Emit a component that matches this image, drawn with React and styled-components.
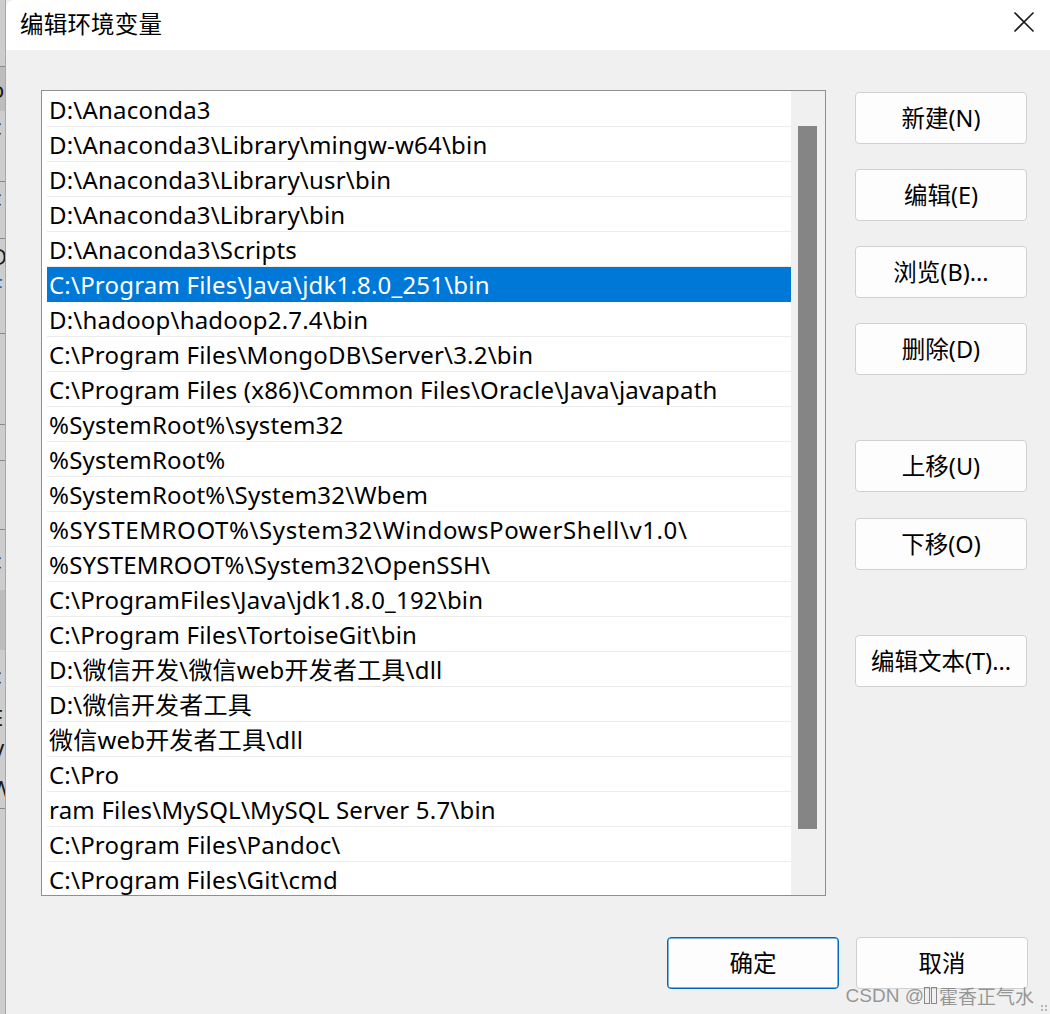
import React from 'react'
import styled, { createGlobalStyle } from 'styled-components'

const GlobalStyle = createGlobalStyle`
  html, body {
    margin: 0;
    padding: 0;
    background: #f0f0f0;
  }
  body {
    font-family: "Noto Sans", "Noto Sans CJK SC", sans-serif;
    color: #000;
  }
`

const paths = [
  'D:\\Anaconda3',
  'D:\\Anaconda3\\Library\\mingw-w64\\bin',
  'D:\\Anaconda3\\Library\\usr\\bin',
  'D:\\Anaconda3\\Library\\bin',
  'D:\\Anaconda3\\Scripts',
  'C:\\Program Files\\Java\\jdk1.8.0_251\\bin',
  'D:\\hadoop\\hadoop2.7.4\\bin',
  'C:\\Program Files\\MongoDB\\Server\\3.2\\bin',
  'C:\\Program Files (x86)\\Common Files\\Oracle\\Java\\javapath',
  '%SystemRoot%\\system32',
  '%SystemRoot%',
  '%SystemRoot%\\System32\\Wbem',
  '%SYSTEMROOT%\\System32\\WindowsPowerShell\\v1.0\\',
  '%SYSTEMROOT%\\System32\\OpenSSH\\',
  'C:\\ProgramFiles\\Java\\jdk1.8.0_192\\bin',
  'C:\\Program Files\\TortoiseGit\\bin',
  'D:\\微信开发\\微信web开发者工具\\dll',
  'D:\\微信开发者工具',
  '微信web开发者工具\\dll',
  'C:\\Pro',
  'ram Files\\MySQL\\MySQL Server 5.7\\bin',
  'C:\\Program Files\\Pandoc\\',
  'C:\\Program Files\\Git\\cmd',
]

const sideButtons = [
  { label: '新建(N)', gap: 0 },
  { label: '编辑(E)', gap: 25 },
  { label: '浏览(B)...', gap: 25 },
  { label: '删除(D)', gap: 25 },
  { label: '上移(U)', gap: 65 },
  { label: '下移(O)', gap: 26 },
  { label: '编辑文本(T)...', gap: 65 },
]

// bits of the window lying behind the dialog
const backRows = [
  { h: 66, ch: '', line: true },
  { h: 44, ch: 'o', shade: true },
  { h: 30, ch: 'c' },
  { h: 40, ch: 'r', line: true },
  { h: 30, ch: 'c' },
  { h: 26, ch: 'l', line: true },
  { h: 34, ch: 'D' },
  { h: 26, ch: 'F', blue: true },
  { h: 34, ch: 'l', blue: true, line: true },
  { h: 90, ch: '', line: true },
  { h: 35, ch: '', line: true },
  { h: 68, ch: '', line: true },
  { h: 60, ch: 'c' },
  { h: 60, ch: '', shade: true },
  { h: 50, ch: 'c' },
  { h: 34, ch: 'E' },
  { h: 34, ch: 'V' },
  { h: 40, ch: 'W', line: true },
  { h: 200, ch: '' },
]

const Screen = styled.div`
  display: flex;
  width: 1050px;
  height: 1014px;
  overflow: hidden;
  position: relative;
`

const BackStrip = styled.div`
  width: 5px;
  flex: none;
  background: #cdcdcd;
  border-right: 1px solid #a8a8a8;
  display: flex;
  flex-direction: column;
  overflow: hidden;
`

const BackRow = styled.div`
  height: ${(p) => p.$h}px;
  flex: none;
  position: relative;
  background: ${(p) => (p.$shade ? '#bdbdbd' : 'transparent')};
  border-bottom: ${(p) => (p.$line ? '1px solid #8a8a8a' : 'none')};
  font-size: 22px;
  line-height: ${(p) => p.$h}px;
  color: ${(p) => (p.$blue ? '#1a6fc4' : '#1a1a1a')};
  white-space: nowrap;
  text-indent: -9px;
`

const Dialog = styled.div`
  flex: 1;
  display: flex;
  flex-direction: column;
  background: #f0f0f0;
  border-top-left-radius: 8px;
  overflow: hidden;
`

const TitleBar = styled.div`
  height: 50px;
  flex: none;
  background: #fff;
  display: flex;
  align-items: center;
  justify-content: space-between;
  padding: 0 15px 0 14px;
  box-sizing: border-box;
`

const Title = styled.div`
  font-size: 23.5px;
  letter-spacing: 0.2px;
  color: #000;
  padding-bottom: 4px;
`

const CloseIcon = styled.svg`
  width: 22px;
  height: 22px;
  margin-bottom: 6px;
`

const Body = styled.div`
  flex: 1;
  display: flex;
  flex-direction: column;
  padding: 40px 22px 0 35px;
`

const Main = styled.div`
  display: flex;
  gap: 29px;
`

const ListBox = styled.div`
  width: 785px;
  height: 806px;
  box-sizing: border-box;
  border: 1px solid #8e8f94;
  background: #fff;
  display: flex;
  overflow: hidden;
  flex: none;
`

const Rows = styled.div`
  flex: 1;
  padding: 1px 0 0 5px;
  display: flex;
  flex-direction: column;
  overflow: hidden;
`

const Row = styled.div`
  height: 35px;
  flex: none;
  box-sizing: border-box;
  border-bottom: 1px solid ${(p) => (p.$selected ? '#0078d7' : '#ececec')};
  background: ${(p) => (p.$selected ? '#0078d7' : '#fff')};
  color: ${(p) => (p.$selected ? '#fff' : '#000')};
  font-size: 24px;
  letter-spacing: ${(p) => (p.$wide ? '0.6px' : '0.2px')};
  line-height: 35px;
  padding-left: 2px;
  white-space: nowrap;
  overflow: hidden;
`

const ScrollTrack = styled.div`
  width: 34px;
  flex: none;
  background: #f0f0f0;
  padding: 35px 8px 0 7px;
  box-sizing: border-box;
`

const ScrollThumb = styled.div`
  height: 703px;
  background: #858585;
`

const ButtonColumn = styled.div`
  display: flex;
  flex-direction: column;
  padding-top: 2px;
`

const Button = styled.button`
  width: 172px;
  height: 52px;
  box-sizing: border-box;
  margin-top: ${(p) => p.$gap || 0}px;
  background: #fdfdfd;
  border: 1px solid ${(p) => (p.$primary ? '#0067c0' : '#d0d0d0')};
  box-shadow: ${(p) => (p.$primary ? 'inset 0 0 0 0.5px #0067c0' : 'none')};
  border-radius: 4px;
  font-family: "Noto Sans", "Noto Sans CJK SC", sans-serif;
  font-size: 23.5px;
  color: #000;
  padding: 0 0 2px;
  white-space: nowrap;
`

const Footer = styled.div`
  display: flex;
  justify-content: flex-end;
  gap: 17px;
  margin-top: 41px;
`

const Watermark = styled.div`
  position: absolute;
  right: 16px;
  bottom: 5px;
  font-family: "Liberation Sans", "Noto Sans CJK SC", sans-serif;
  font-size: 19px;
  color: rgba(110, 110, 110, 0.7);
  display: flex;
  align-items: center;
  white-space: nowrap;
`

const Tofu = styled.span`
  display: inline-block;
  width: 4px;
  height: 15px;
  border: 1px solid rgba(110, 110, 110, 0.8);
  margin: 0 1px 0 0;
  & + & {
    margin-right: 2px;
  }
`

const Grip = styled.div`
  position: absolute;
  right: 2px;
  bottom: 2px;
  width: 8px;
  height: 8px;
  background-image: radial-gradient(#b5b5b5 1px, transparent 1.2px);
  background-size: 4px 4px;
`

export default function App() {
  return (
    <>
      <GlobalStyle />
      <Screen>
        <BackStrip>
          {backRows.map((r, i) => (
            <BackRow key={i} $h={r.h} $shade={r.shade} $line={r.line} $blue={r.blue}>
              {r.ch}
            </BackRow>
          ))}
        </BackStrip>
        <Dialog>
          <TitleBar>
            <Title>编辑环境变量</Title>
            <CloseIcon viewBox="0 0 22 22">
              <path d="M1.5 1.5 L20.5 20.5 M20.5 1.5 L1.5 20.5" stroke="#1a1a1a" strokeWidth="1.6" fill="none" />
            </CloseIcon>
          </TitleBar>
          <Body>
            <Main>
              <ListBox>
                <Rows>
                  {paths.map((p, i) => (
                    <Row key={i} $selected={i === 5} $wide={i === 12}>
                      {p}
                    </Row>
                  ))}
                </Rows>
                <ScrollTrack>
                  <ScrollThumb />
                </ScrollTrack>
              </ListBox>
              <ButtonColumn>
                {sideButtons.map((b) => (
                  <Button key={b.label} $gap={b.gap}>
                    {b.label}
                  </Button>
                ))}
              </ButtonColumn>
            </Main>
            <Footer>
              <Button $primary>确定</Button>
              <Button>取消</Button>
            </Footer>
          </Body>
        </Dialog>
        <Watermark>
          CSDN @<Tofu /><Tofu />霍香正气水
        </Watermark>
        <Grip />
      </Screen>
    </>
  )
}
